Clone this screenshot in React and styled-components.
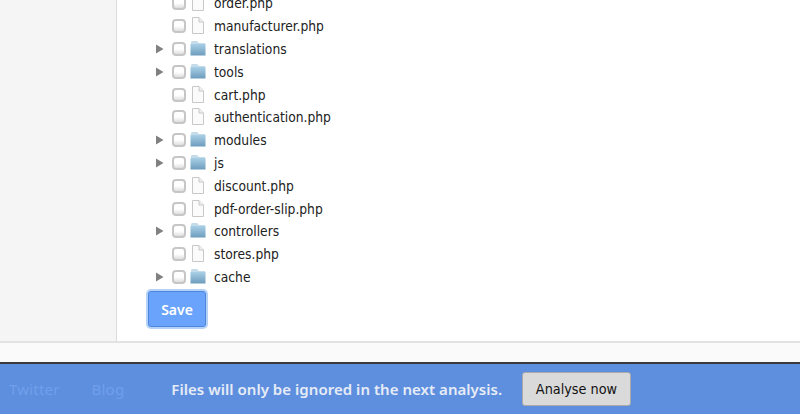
import React from 'react';
import styled, { createGlobalStyle } from 'styled-components';

const GlobalStyle = createGlobalStyle`
  html, body {
    margin: 0;
    padding: 0;
    height: 414px;
    overflow: hidden;
    background: #fafafa;
  }
`;

const Page = styled.div`
  display: flex;
  flex-direction: column;
  width: 800px;
  height: 414px;
  overflow: hidden;
`;

const Content = styled.div`
  display: flex;
  height: 341px;
  flex: none;
  border-bottom: 2px solid #e2e2e2;
`;

const Sidebar = styled.div`
  width: 116px;
  flex: none;
  background: #f5f5f5;
  border-right: 1px solid #dcdcdc;
`;

const Main = styled.div`
  flex: 1;
  background: #fff;
  display: flex;
  flex-direction: column;
  justify-content: flex-end;
  overflow: hidden;
  padding: 0 0 14px 29px;
`;

const Tree = styled.div`
  display: flex;
  flex: none;
  flex-direction: column;
  margin-bottom: 2.6px;
`;

const Row = styled.div`
  display: flex;
  align-items: center;
  height: 22.8px;
  font-family: "DejaVu Sans Condensed", "DejaVu Sans", sans-serif;
  font-stretch: condensed;
  font-size: 13.7px;
  color: #222;
`;

const ArrowSlot = styled.span`
  width: 10px;
  margin: 0 7px 0 9px;
  display: flex;
`;

const Check = styled.span`
  width: 10px;
  height: 10px;
  border: 2px solid #c6c6c6;
  border-radius: 4px;
  background: linear-gradient(#fff 50%, #dedede);
  margin-right: 4px;
  flex: none;
`;

const IconSlot = styled.span`
  width: 16px;
  height: 18px;
  margin-right: 8px;
  margin-top: -2px;
  display: flex;
  flex: none;
`;

const SaveButton = styled.button`
  width: 58px;
  height: 36px;
  flex: none;
  margin: 0 0 0 2px;
  padding: 0;
  background: #6aa3fb;
  border: 1px solid #4f86dd;
  border-radius: 3px;
  box-shadow: 0 0 0 2px #b4d2f7;
  color: #fff;
  font-family: "Noto Sans", sans-serif;
  font-size: 14px;
  font-weight: 600;
`;

const Spacer = styled.div`
  height: 19px;
  flex: none;
  background: #fafafa;
`;

const Footer = styled.div`
  flex: 1;
  display: flex;
  align-items: center;
  background: #5e8fdf;
  border-top: 2px solid #3a3a3a;
  padding: 0 169px 0 9px;
  font-family: "Noto Sans", sans-serif;
  font-size: 15px;
  letter-spacing: 0.2px;
  white-space: nowrap;
`;

const FooterLink = styled.a`
  color: #719eea;
  margin-right: 32px;
`;

const Notice = styled.span`
  flex: 1;
  margin-left: 15px;
  color: #e6ecf6;
  font-weight: 600;
  letter-spacing: 0.04px;
`;

const Analyse = styled.button`
  width: 109px;
  height: 34px;
  flex: none;
  padding: 0;
  background: #dadada;
  border: 1px solid #aaa;
  border-radius: 3px;
  color: #111;
  font-family: "DejaVu Sans Condensed", "DejaVu Sans", sans-serif;
  font-size: 14.3px;
  letter-spacing: 0;
`;

const Arrow = () => (
  <svg width="10" height="10" viewBox="0 0 10 10">
    <path d="M1 0.5 L8.5 5 L1 9.5 Z" fill="#808080" />
  </svg>
);

const Folder = () => (
  <svg width="16" height="18" viewBox="0 0 16 18">
    <defs>
      <linearGradient id="folderFill" x1="0" y1="0" x2="0" y2="1">
        <stop offset="0" stopColor="#a9cfe6" />
        <stop offset="1" stopColor="#6d9cbd" />
      </linearGradient>
    </defs>
    <path d="M1 3 L2 2 H7 L9 4 H15 V6 H1 Z" fill="#c4dbe9" />
    <rect x="0.5" y="5" width="15" height="11.5" fill="url(#folderFill)" />
  </svg>
);

const FileIcon = () => (
  <svg width="16" height="18" viewBox="0 0 16 18">
    <path d="M2.5 1.5 H9 L13.5 6 V17.5 H2.5 Z" fill="#fbfbfb" stroke="#c8c8c8" />
    <path d="M9 1.5 V6 H13.5" fill="#efefef" stroke="#c8c8c8" />
  </svg>
);

const items = [
  ['order.php', false],
  ['manufacturer.php', false],
  ['translations', true],
  ['tools', true],
  ['cart.php', false],
  ['authentication.php', false],
  ['modules', true],
  ['js', true],
  ['discount.php', false],
  ['pdf-order-slip.php', false],
  ['controllers', true],
  ['stores.php', false],
  ['cache', true],
];

export default function App() {
  return (
    <Page>
      <GlobalStyle />
      <Content>
        <Sidebar />
        <Main>
          <Tree>
            {items.map(([name, isFolder]) => (
              <Row key={name}>
                <ArrowSlot>{isFolder && <Arrow />}</ArrowSlot>
                <Check />
                <IconSlot>{isFolder ? <Folder /> : <FileIcon />}</IconSlot>
                {name}
              </Row>
            ))}
          </Tree>
          <SaveButton>Save</SaveButton>
        </Main>
      </Content>
      <Spacer />
      <Footer>
        <FooterLink>Twitter</FooterLink>
        <FooterLink>Blog</FooterLink>
        <Notice>Files will only be ignored in the next analysis.</Notice>
        <Analyse>Analyse now</Analyse>
      </Footer>
    </Page>
  );
}
